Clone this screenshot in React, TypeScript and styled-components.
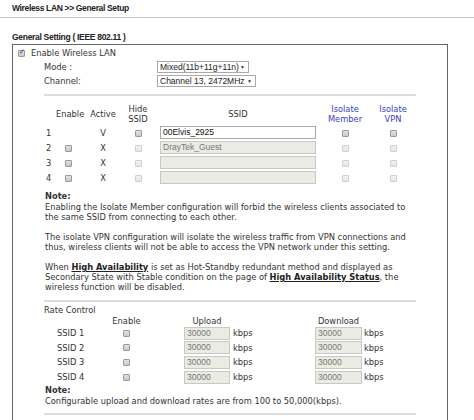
import { Fragment } from "react";
import styled, { createGlobalStyle } from "styled-components";

const GlobalStyle = createGlobalStyle`
  body {
    margin: 0;
    background: #fff;
    font-family: "DejaVu Sans", Verdana, sans-serif;
    font-size: 8.3px;
    color: #333;
  }
`;

const Page = styled.div`
  padding-top: 2px;
  height: 420px;
  overflow: hidden;
`;

const Title = styled.div`
  font-family: "Liberation Sans", Arial, sans-serif;
  font-weight: bold;
  font-size: 8.5px;
  letter-spacing: -0.35px;
  line-height: 12px;
  color: #222;
  padding: 0 12px 3px;
  border-bottom: 1px solid #ccc;
`;

const SectionTitle = styled.div`
  font-family: "Liberation Sans", Arial, sans-serif;
  font-weight: bold;
  font-size: 8.5px;
  letter-spacing: -0.3px;
  line-height: 12px;
  color: #222;
  margin: 13px 12px 1px;
`;

const Box = styled.div`
  width: 436px;
  margin-left: 12px;
  border: 1px solid #666;
  border-bottom: none;
  padding: 1px 0 0 5px;
  box-sizing: border-box;
  min-height: 400px;
`;

const EnableRow = styled.label`
  display: flex;
  align-items: center;
  gap: 6px;
  height: 14px;
`;

const Inner = styled.div`
  margin-left: 26px;
  width: 372px;
`;

const FieldRow = styled.div`
  display: flex;
  align-items: center;
  height: 14px;
`;

const FieldLabel = styled.span`
  width: 113px;
`;

const Select = styled.div<{ $w: number }>`
  width: ${(p) => p.$w}px;
  height: 12px;
  box-sizing: border-box;
  border: 1px solid #a9a9a9;
  background: #fff;
  display: flex;
  align-items: center;
  justify-content: space-between;
  padding: 0 3px 0 2px;
  font-family: "Liberation Sans", Arial, sans-serif;
  font-size: 8.5px;
  color: #222;
`;

const Arrow = styled.span`
  font-size: 5px;
  color: #333;
`;

const Rule = styled.div<{ $mt: number; $mb: number }>`
  height: 2px;
  background: #ddd;
  margin-top: ${(p) => p.$mt}px;
  margin-bottom: ${(p) => p.$mb}px;
`;

const Table = styled.table`
  border-collapse: collapse;
  table-layout: fixed;
  width: 377px;
`;

const Th = styled.th<{ $w: number; $blue?: boolean }>`
  width: ${(p) => p.$w}px;
  font-weight: normal;
  line-height: 10px;
  height: 22px;
  padding: 0;
  text-align: center;
  vertical-align: middle;
  color: ${(p) => (p.$blue ? "#3d3dc4" : "#333")};
`;

const Td = styled.td<{ $left?: boolean }>`
  height: 15px;
  padding: 0;
  text-align: ${(p) => (p.$left ? "left" : "center")};
  padding-left: ${(p) => (p.$left ? "2px" : "0")};
  vertical-align: middle;
`;

const Check = styled.span<{ $on?: boolean; $checked?: boolean }>`
  display: inline-block;
  width: 7px;
  height: 7px;
  box-sizing: border-box;
  border-radius: 1px;
  border: 1px solid ${(p) => (p.$on ? "#9a9a9a" : "#cfcfcf")};
  background: ${(p) =>
    p.$on ? "linear-gradient(#e2e2e2, #c9c9c9)" : "linear-gradient(#f2f2f2, #e6e6e6)"};
  vertical-align: middle;
  position: relative;
  &::after {
    content: ${(p) => (p.$checked ? '"✓"' : "none")};
    position: absolute;
    left: 0px;
    top: -3px;
    font-size: 7px;
    font-weight: bold;
    color: #333;
  }
`;

const TextInput = styled.div<{ $w: number; $on?: boolean }>`
  width: ${(p) => p.$w}px;
  height: 13px;
  box-sizing: border-box;
  margin: 0 auto;
  border: 1px solid ${(p) => (p.$on ? "#a9a9a9" : "#c8c8c8")};
  background: ${(p) => (p.$on ? "#fff" : "#ebebe4")};
  color: ${(p) => (p.$on ? "#111" : "#777")};
  font-family: "Liberation Sans", Arial, sans-serif;
  font-size: 8.5px;
  line-height: 11px;
  padding-left: 2px;
  text-align: left;
`;

const NoteHead = styled.div<{ $mt: number }>`
  font-weight: bold;
  line-height: 11px;
  margin-top: ${(p) => p.$mt}px;
  margin-left: 1px;
`;

const Para = styled.p<{ $mb?: number }>`
  margin: 0 0 ${(p) => p.$mb ?? 0}px 1px;
  line-height: 10px;
`;

const Link = styled.span`
  font-weight: bold;
  text-decoration: underline;
  color: #222;
`;

const RateTitle = styled.div`
  line-height: 11px;
  margin-top: 3px;
`;

const RateGrid = styled.div`
  display: grid;
  grid-template-columns: 64px 37px 39px 46px 85px 47px auto;
  align-items: center;
`;

const RateHead = styled.div`
  text-align: center;
  line-height: 10px;
  height: 10px;
  white-space: nowrap;
`;

const RateCell = styled.div<{ $center?: boolean; $pl?: number }>`
  height: 14.6px;
  display: flex;
  align-items: center;
  justify-content: ${(p) => (p.$center ? "center" : "flex-start")};
  padding-left: ${(p) => p.$pl ?? 0}px;
`;

const ssids = [
  { n: 1, enable: false, active: "V", name: "00Elvis_2925", on: true },
  { n: 2, enable: true, active: "X", name: "DrayTek_Guest", on: false },
  { n: 3, enable: true, active: "X", name: "", on: false },
  { n: 4, enable: true, active: "X", name: "", on: false },
];

export default function App() {
  return (
    <Page>
      <GlobalStyle />
      <Title>Wireless LAN &gt;&gt; General Setup</Title>
      <SectionTitle>General Setting ( IEEE 802.11 )</SectionTitle>
      <Box>
        <EnableRow>
          <Check $on $checked />
          Enable Wireless LAN
        </EnableRow>
        <Inner>
          <FieldRow>
            <FieldLabel>Mode :</FieldLabel>
            <Select $w={92}>
              Mixed(11b+11g+11n) <Arrow>▼</Arrow>
            </Select>
          </FieldRow>
          <FieldRow>
            <FieldLabel>Channel:</FieldLabel>
            <Select $w={99}>
              Channel 13, 2472MHz <Arrow>▼</Arrow>
            </Select>
          </FieldRow>
          <Rule $mt={6} $mb={7} />
          <Table>
            <thead>
              <tr>
                <Th $w={12} />
                <Th $w={25}>Enable</Th>
                <Th $w={44}>Active</Th>
                <Th $w={26}>
                  Hide
                  <br />
                  SSID
                </Th>
                <Th $w={174}>SSID</Th>
                <Th $w={40} $blue>
                  Isolate
                  <br />
                  Member
                </Th>
                <Th $w={56} $blue>
                  Isolate
                  <br />
                  VPN
                </Th>
              </tr>
            </thead>
            <tbody>
              {ssids.map((s) => (
                <tr key={s.n}>
                  <Td $left>{s.n}</Td>
                  <Td>{s.enable && <Check $on />}</Td>
                  <Td>{s.active}</Td>
                  <Td>
                    <Check $on={s.on} />
                  </Td>
                  <Td>
                    <TextInput $w={156} $on={s.on}>
                      {s.name}
                    </TextInput>
                  </Td>
                  <Td>
                    <Check $on={s.on} />
                  </Td>
                  <Td>
                    <Check $on={s.on} />
                  </Td>
                </tr>
              ))}
            </tbody>
          </Table>
          <NoteHead $mt={6}>Note:</NoteHead>
          <Para $mb={10}>
            Enabling the Isolate Member configuration will forbid the wireless clients associated to
            the same SSID from connecting to each other.
          </Para>
          <Para $mb={10}>
            The isolate VPN configuration will isolate the wireless traffic from VPN connections and
            thus, wireless clients will not be able to access the VPN network under this setting.
          </Para>
          <Para>
            When <Link>High Availability</Link> is set as Hot-Standby redundant method and displayed as
            Secondary State with Stable condition on the page of <Link>High Availability Status</Link>,
            the wireless function will be disabled.
          </Para>
          <Rule $mt={8} $mb={3} />
          <RateTitle>Rate Control</RateTitle>
          <RateGrid>
            <RateHead />
            <RateHead>Enable</RateHead>
            <RateHead />
            <RateHead>Upload</RateHead>
            <RateHead />
            <RateHead>Download</RateHead>
            <RateHead />
            {[1, 2, 3, 4].map((n) => (
              <Fragment key={n}>
                <RateCell $pl={13}>SSID {n}</RateCell>
                <RateCell $center>
                  <Check $on />
                </RateCell>
                <RateCell />
                <RateCell>
                  <TextInput $w={46}>30000</TextInput>
                </RateCell>
                <RateCell $pl={3}>kbps</RateCell>
                <RateCell>
                  <TextInput $w={47}>30000</TextInput>
                </RateCell>
                <RateCell $pl={2}>kbps</RateCell>
              </Fragment>
            ))}
          </RateGrid>
          <NoteHead $mt={1}>Note:</NoteHead>
          <Para>Configurable upload and download rates are from 100 to 50,000(kbps).</Para>
          <Rule $mt={7} $mb={0} />
        </Inner>
      </Box>
    </Page>
  );
}
